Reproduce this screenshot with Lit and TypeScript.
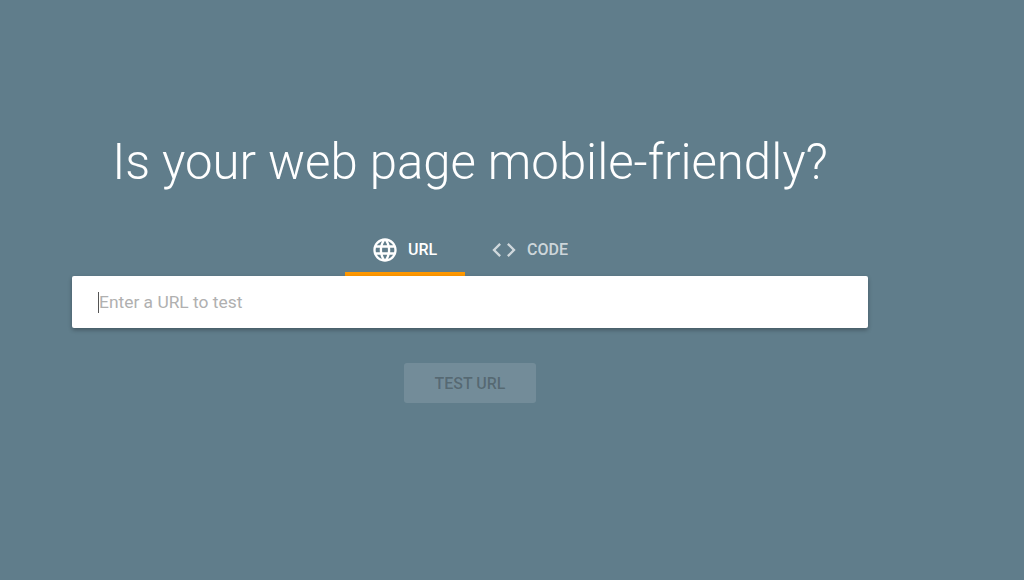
import { LitElement, html, css } from "lit";
import { customElement } from "lit/decorators.js";

@customElement("app-root")
export class AppRoot extends LitElement {
  static styles = css`
    :host {
      display: block;
      width: 1024px;
      height: 580px;
      background: #607d8b;
      font-family: Roboto, "Liberation Sans", sans-serif;
      overflow: hidden;
    }
    .page {
      width: 796px;
      margin-left: 72px;
      padding-top: 130px;
      display: flex;
      flex-direction: column;
      align-items: center;
    }
    h1 {
      margin: 0;
      font-weight: 300;
      font-size: 49.1px;
      line-height: 64px;
      color: #fff;
      white-space: nowrap;
    }
    .tabs {
      display: flex;
      margin-top: 34px;
      height: 48px;
      width: 250px;
    }
    .tab {
      display: flex;
      align-items: center;
      gap: 9px;
      height: 48px;
      box-sizing: border-box;
      padding: 0 0 5px 25px;
      font-size: 16px;
      font-weight: 500;
      color: rgba(255, 255, 255, 0.7);
    }
    .tab.active {
      width: 120px;
      flex: none;
      padding: 0 0 1px 26px;
      color: #fff;
      border-bottom: 4px solid #ff9800;
    }
    .tab svg {
      width: 28px;
      height: 28px;
      fill: currentColor;
      display: block;
      flex: none;
    }
    .field {
      width: 100%;
      height: 52px;
      box-sizing: border-box;
      background: #fff;
      border-radius: 2px;
      box-shadow: 0 2px 4px rgba(0, 0, 0, 0.3);
      padding-left: 26px;
      display: flex;
      align-items: center;
    }
    .caret {
      width: 1px;
      height: 21px;
      background: #555;
      flex: none;
    }
    .placeholder {
      font-size: 17.4px;
      color: #b0b0b0;
    }
    .btn {
      margin-top: 35px;
      width: 132px;
      height: 40px;
      border-radius: 3px;
      background: rgba(255, 255, 255, 0.12);
      color: rgba(0, 0, 0, 0.26);
      font-size: 16px;
      font-weight: 500;
      display: flex;
      align-items: center;
      justify-content: center;
    }
  `;

  render() {
    return html`
      <div class="page">
        <h1>Is your web page mobile-friendly?</h1>
        <div class="tabs">
          <div class="tab active">
            <svg viewBox="0 0 24 24"><path d="M11.99 2C6.47 2 2 6.48 2 12s4.47 10 9.99 10C17.52 22 22 17.52 22 12S17.52 2 11.99 2zm6.93 6h-2.95c-.32-1.25-.78-2.45-1.38-3.56 1.84.63 3.37 1.91 4.33 3.56zM12 4.04c.83 1.2 1.48 2.53 1.91 3.96h-3.82c.43-1.43 1.08-2.76 1.91-3.96zM4.26 14C4.1 13.36 4 12.69 4 12s.1-1.36.26-2h3.38c-.08.66-.14 1.32-.14 2 0 .68.06 1.34.14 2H4.26zm.82 2h2.95c.32 1.25.78 2.45 1.38 3.56-1.84-.63-3.37-1.9-4.33-3.56zm2.95-8H5.08c.96-1.66 2.49-2.93 4.33-3.56C8.81 5.55 8.35 6.75 8.03 8zM12 19.96c-.83-1.2-1.48-2.53-1.91-3.96h3.82c-.43 1.43-1.08 2.76-1.91 3.96zM14.34 14H9.66c-.09-.66-.16-1.32-.16-2 0-.68.07-1.35.16-2h4.68c.09.65.16 1.32.16 2 0 .68-.07 1.34-.16 2zm.25 5.56c.6-1.11 1.06-2.31 1.38-3.56h2.95c-.96 1.65-2.49 2.93-4.33 3.56zM16.36 14c.08-.66.14-1.32.14-2 0-.68-.06-1.34-.14-2h3.38c.16.64.26 1.31.26 2s-.1 1.36-.26 2h-3.38z"/></svg>
            <span>URL</span>
          </div>
          <div class="tab">
            <svg viewBox="0 0 24 24"><path d="M9.4 16.6 4.8 12l4.6-4.6L8 6l-6 6 6 6 1.4-1.4zm5.2 0 4.6-4.6-4.6-4.6L16 6l6 6-6 6-1.4-1.4z"/></svg>
            <span>CODE</span>
          </div>
        </div>
        <div class="field">
          <div class="caret"></div>
          <span class="placeholder">Enter a URL to test</span>
        </div>
        <div class="btn">TEST URL</div>
      </div>
    `;
  }
}
